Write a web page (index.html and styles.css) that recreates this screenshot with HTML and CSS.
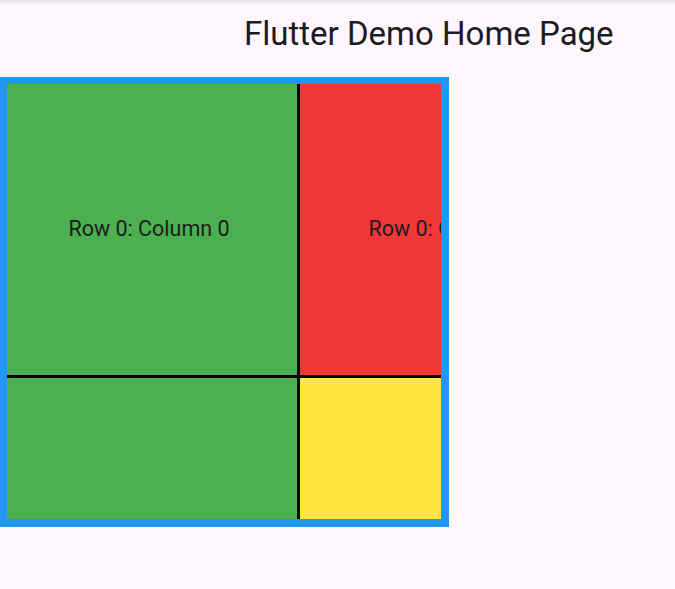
FILE: index.html
```html
<!DOCTYPE html>
<html>
<head>
<meta charset="utf-8">
<link rel="stylesheet" href="styles.css">
</head>
<body>
<div class="shadow"></div>
<header class="appbar"><span class="title">Flutter Demo Home Page</span></header>
<main class="frame">
  <div class="grid">
    <div class="cell green first">Row 0: Column 0</div>
    <div class="cell red second">Row 0: Column 1</div>
    <div class="cell green"></div>
    <div class="cell yellow"></div>
  </div>
</main>
</body>
</html>
```
FILE: styles.css
```css
html, body {
  margin: 0;
  padding: 0;
  background: #fef7ff;
  font-family: Roboto, "Noto Sans", sans-serif;
  color: #1d1b20;
  width: 675px;
  height: 589px;
  overflow: hidden;
}
.shadow {
  position: absolute;
  left: 0;
  top: 0;
  width: 675px;
  height: 5px;
  background: linear-gradient(to bottom, rgba(0,0,0,0.10), rgba(0,0,0,0));
}
.appbar {
  height: 77px;
  display: flex;
  align-items: center;
  padding-left: 244px;
  box-sizing: border-box;
}
.title {
  font-size: 33px;
  line-height: 38px;
  margin-top: -9px;
  white-space: nowrap;
}
.frame {
  width: 449px;
  height: 450px;
  box-sizing: border-box;
  border-style: solid;
  border-color: #2196f3;
  border-width: 7px 8px 8px 7px;
  overflow: hidden;
}
.grid {
  display: grid;
  grid-template-columns: 290px 290px;
  grid-template-rows: 291px 291px;
  column-gap: 3px;
  row-gap: 3px;
  background: #000;
  width: 583px;
}
.cell {
  display: flex;
  align-items: center;
  justify-content: center;
  font-size: 21.5px;
  white-space: nowrap;
  padding-bottom: 2px;
  box-sizing: border-box;
}
.first { padding-right: 6px; }
.second { padding-left: 8px; }
.green { background: #4caf50; }
.red { background: #f23737; }
.yellow { background: #ffe641; }
```
